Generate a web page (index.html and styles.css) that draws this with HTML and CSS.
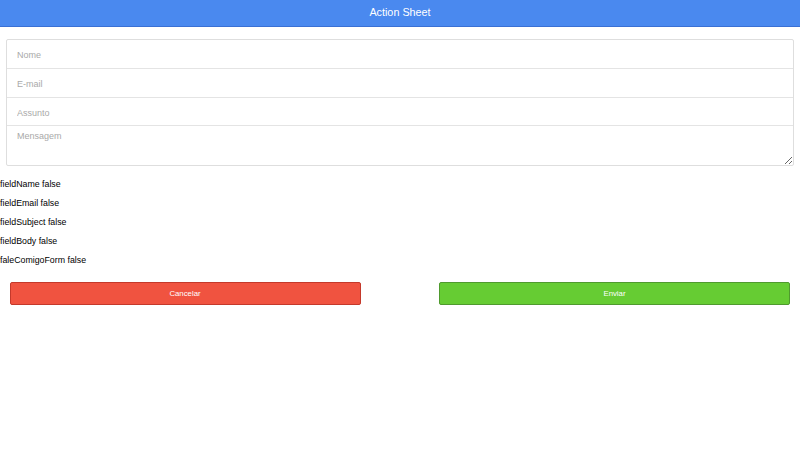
FILE: index.html
```html
<!DOCTYPE html>
<html lang="pt">
<head>
<meta charset="utf-8">
<title>Action Sheet</title>
<link rel="stylesheet" href="styles.css">
</head>
<body>
<header class="toolbar">
  <div class="toolbar-title">Action Sheet</div>
</header>
<main class="content">
  <form class="form-list">
    <input class="field" type="text" placeholder="Nome">
    <input class="field" type="email" placeholder="E-mail">
    <input class="field" type="text" placeholder="Assunto">
    <textarea class="field field-area" placeholder="Mensagem"></textarea>
  </form>
  <div class="debug">
    <div class="debug-line">fieldName false</div>
    <div class="debug-line">fieldEmail false</div>
    <div class="debug-line">fieldSubject false</div>
    <div class="debug-line">fieldBody false</div>
    <div class="debug-line">faleComigoForm false</div>
  </div>
  <div class="actions">
    <button class="btn btn-cancel" type="button">Cancelar</button>
    <button class="btn btn-send" type="button">Enviar</button>
  </div>
</main>
</body>
</html>
```
FILE: styles.css
```css
* { box-sizing: border-box; }
html, body {
  margin: 0;
  padding: 0;
  background: #ffffff;
  font-family: "Liberation Sans", Arial, sans-serif;
  color: #000;
}
.toolbar {
  height: 27px;
  background: #4a89ef;
  border-bottom: 1px solid #3a70d4;
  display: flex;
  align-items: center;
  justify-content: center;
}
.toolbar-title {
  color: #ffffff;
  font-size: 10.8px;
  line-height: 1;
  padding-bottom: 1px;
}
.content {
  padding: 12px 0 0 0;
}
.form-list {
  margin: 0 6px 0 6px;
  border: 1px solid #dedede;
  border-radius: 2px;
  display: flex;
  flex-direction: column;
}
.field {
  display: block;
  width: 100%;
  margin: 0;
  border: none;
  border-bottom: 1px solid #e4e4e4;
  outline: none;
  background: transparent;
  font-family: "Liberation Sans", Arial, sans-serif;
  font-size: 9px;
  color: #333;
  padding: 2px 10px 0 10px;
  height: 29px;
}
.field:nth-child(3) { height: 28px; }
.field::placeholder { color: #a9a9a9; }
.field-area {
  height: 39px;
  border-bottom: none;
  padding: 5px 10px 0 10px;
  line-height: 11px;
  resize: vertical;
}
.debug {
  padding-top: 9px;
  font-size: 8.8px;
  color: #000;
}
.debug-line {
  height: 19px;
  line-height: 19px;
}
.actions {
  display: flex;
  justify-content: space-between;
  padding: 11.5px 10px 0 9.5px;
}
.btn {
  width: 351px;
  height: 23.5px;
  border-radius: 2px;
  font-family: "Liberation Sans", Arial, sans-serif;
  font-size: 7.8px;
  color: #ffffff;
  padding: 0;
  cursor: pointer;
}
.btn-cancel {
  background: #f05340;
  border: 1px solid #c4392b;
}
.btn-send {
  background: #66cc33;
  border: 1px solid #4f9a2e;
}
```
